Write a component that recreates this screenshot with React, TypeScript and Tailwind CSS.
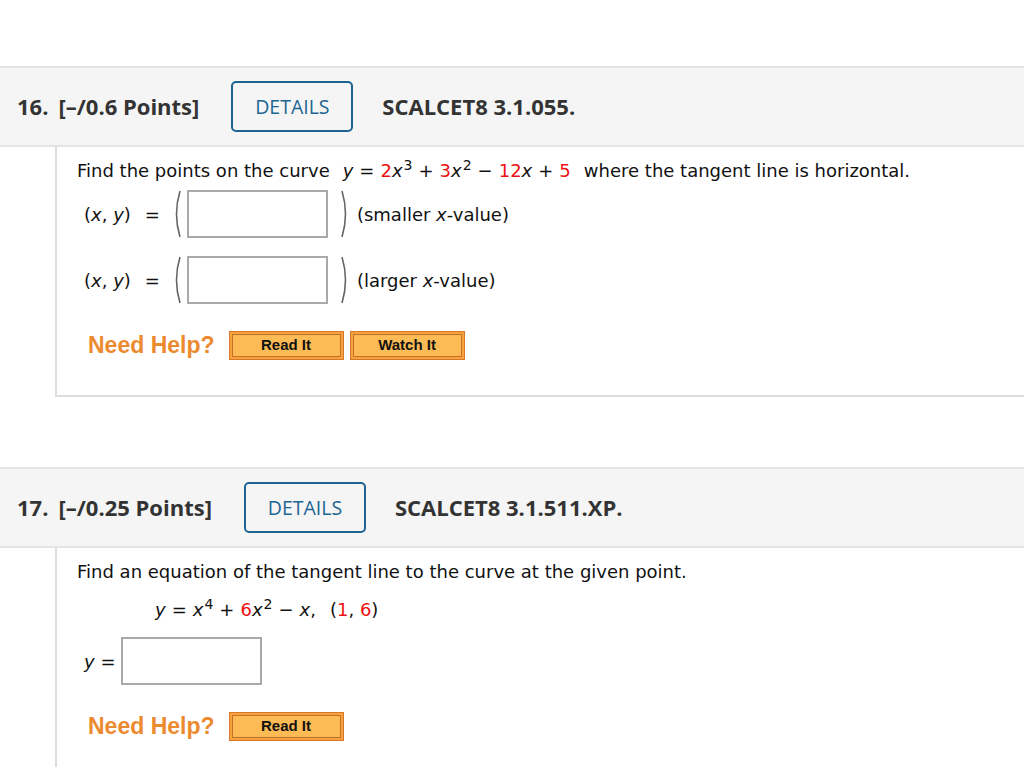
import React from "react";

const body = { fontFamily: '"DejaVu Sans", Verdana, sans-serif' };
const head = { fontFamily: '"Open Sans", "Liberation Sans", sans-serif' };
const arial = { fontFamily: '"Liberation Sans", Arial, sans-serif' };

function Red({ children }: { children: React.ReactNode }) {
  return <span className="text-[#ee1111]">{children}</span>;
}

function Sup({ children }: { children: React.ReactNode }) {
  return <sup className="ml-[1px] text-[14px]">{children}</sup>;
}

function Op({ children }: { children: React.ReactNode }) {
  return <span className="mx-[6px]">{children}</span>;
}

function Paren({ right }: { right?: boolean }) {
  return (
    <svg width="10" height="50" viewBox="0 0 10 50" className="shrink-0">
      <path
        d={right ? "M2 2 Q9 25 2 48" : "M8 2 Q1 25 8 48"}
        fill="none"
        stroke="#666"
        strokeWidth="1.6"
      />
    </svg>
  );
}

function Box() {
  return <div className="h-[48px] w-[141px] border-2 border-[#a9a9a9] bg-white" />;
}

function HelpButton({ label }: { label: string }) {
  return (
    <div className="h-[29px] w-[115px] border border-[#d8762b] bg-[#f7a33d] p-[2px]">
      <div
        className="flex h-full w-full items-center justify-center border border-[#c96f2a] bg-[#fcbb55] text-[15px] font-bold text-[#111]"
        style={arial}
      >
        {label}
      </div>
    </div>
  );
}

function NeedHelp({ buttons }: { buttons: string[] }) {
  return (
    <div className="flex items-center">
      <span className="mr-[14px] text-[23px] font-bold text-[#ec8a2f]" style={arial}>
        Need Help?
      </span>
      <div className="flex gap-[6px]">
        {buttons.map((b) => (
          <HelpButton key={b} label={b} />
        ))}
      </div>
    </div>
  );
}

function Header({ num, pts, code }: { num: string; pts: string; code: string }) {
  return (
    <div
      className="flex h-[81px] items-center border-y-2 border-[#e4e4e4] bg-[#f5f5f5] pl-[17px] text-[22px] font-bold text-[#333]"
      style={head}
    >
      <span>{num}</span>
      <span className="ml-[10px]">{pts}</span>
      <div className="ml-[32px] flex h-[51px] w-[122px] items-center justify-center rounded-[5px] border-2 border-[#1c6593] text-[19.5px] font-medium text-[#1c6593]">
        DETAILS
      </div>
      <span className="ml-[29px]">{code}</span>
    </div>
  );
}

function Pair({ label }: { label: React.ReactNode }) {
  return (
    <div className="flex items-center">
      <span className="ml-[7px]">
        (<i>x</i>, <i>y</i>)
      </span>
      <span className="ml-[14px]">=</span>
      <span className="ml-[12px]" />
      <Paren />
      <span className="ml-[5px]" />
      <Box />
      <span className="ml-[12px]" />
      <Paren right />
      <span className="ml-[7px]">{label}</span>
    </div>
  );
}

export default function App() {
  return (
    <div className="min-h-[767px] bg-white pt-[66px] text-[#111]" style={body}>
      <Header num="16." pts="[–/0.6 Points]" code="SCALCET8 3.1.055." />
      <div className="ml-[55px] flex h-[250px] flex-col border-b-2 border-l-2 border-[#dddddd] pl-[20px] pt-[13px] text-[18px]">
        <p className="leading-[22px]">
          Find the points on the curve
          <span className="ml-[13px]">
            <i>y</i>
            <Op>=</Op>
            <Red>2</Red>
            <i>x</i>
            <Sup>3</Sup>
            <Op>+</Op>
            <Red>3</Red>
            <i>x</i>
            <Sup>2</Sup>
            <Op>−</Op>
            <Red>12</Red>
            <i>x</i>
            <Op>+</Op>
            <Red>5</Red>
          </span>
          <span className="ml-[13px]">where the tangent line is horizontal.</span>
        </p>
        <div className="mt-[7px]">
          <Pair
            label={
              <>
                (smaller <i>x</i>-value)
              </>
            }
          />
        </div>
        <div className="mt-[16px]">
          <Pair
            label={
              <>
                (larger <i>x</i>-value)
              </>
            }
          />
        </div>
        <div className="ml-[11px] mt-[23px]">
          <NeedHelp buttons={["Read It", "Watch It"]} />
        </div>
      </div>

      <div className="h-[70px]" />

      <Header num="17." pts="[–/0.25 Points]" code="SCALCET8 3.1.511.XP." />
      <div className="ml-[55px] flex h-[240px] flex-col border-l-2 border-[#dddddd] pl-[20px] pt-[13px] text-[18px]">
        <p className="leading-[22px]">Find an equation of the tangent line to the curve at the given point.</p>
        <p className="ml-[78px] mt-[16px] leading-[22px]">
          <i>y</i>
          <Op>=</Op>
          <i>x</i>
          <Sup>4</Sup>
          <Op>+</Op>
          <Red>6</Red>
          <i>x</i>
          <Sup>2</Sup>
          <Op>−</Op>
          <i>x</i>,
          <span className="ml-[14px]">
            (<Red>1</Red>, <Red>6</Red>)
          </span>
        </p>
        <div className="mt-[16px] flex items-center">
          <span className="ml-[7px] w-[37px]">
            <i>y</i> =
          </span>
          <Box />
        </div>
        <div className="ml-[11px] mt-[24px]">
          <NeedHelp buttons={["Read It"]} />
        </div>
      </div>
    </div>
  );
}
